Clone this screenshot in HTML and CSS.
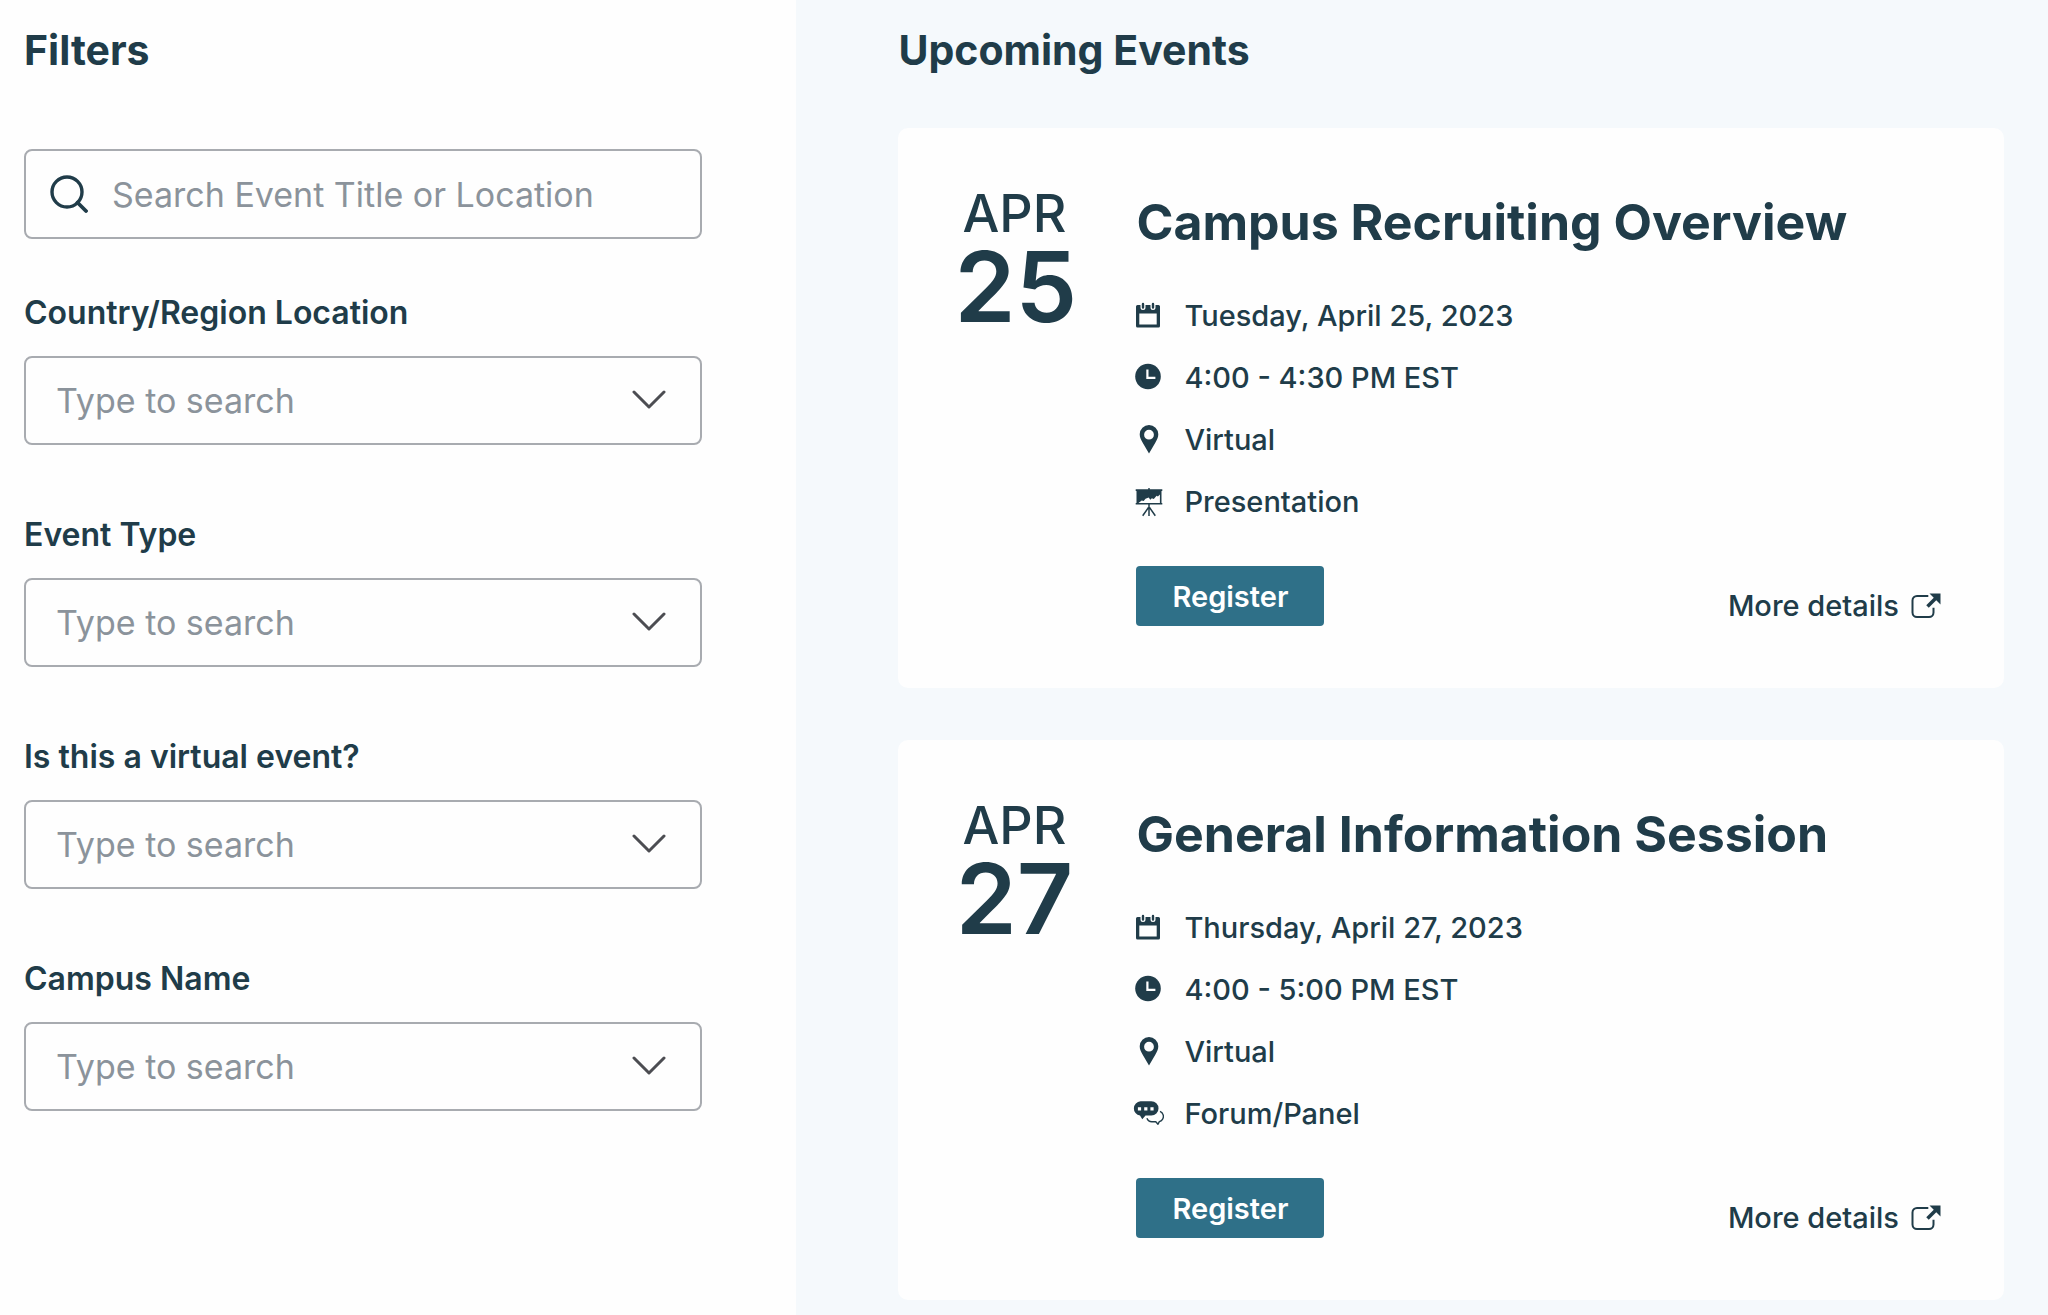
FILE: index.html
```
<!DOCTYPE html>
<html lang="en">
<head>
    <meta charset="UTF-8">
    <meta name="viewport" content="width=device-width, initial-scale=1.0">
    <title>Upcoming Events</title>
    <link rel="stylesheet" href="styles.css">
</head>
<body>
    <!-- Icons shared by the filters and event cards -->
    <svg class="sprite" aria-hidden="true">
        <symbol id="icon-calendar" viewBox="0 0 32 32">
            <path fill="currentColor" fill-rule="evenodd" d="M5.5 5h21A1.5 1.5 0 0 1 28 6.5V26a1.5 1.5 0 0 1-1.5 1.5h-21A1.5 1.5 0 0 1 4 26V6.5A1.5 1.5 0 0 1 5.5 5zM7.3 13.5v11h17.4v-11z"/>
            <path d="M11 4v3.5M21 4v3.5" stroke="#fff" stroke-width="5" stroke-linecap="round"/>
            <path d="M11 4v3.5M21 4v3.5" stroke="currentColor" stroke-width="2.4" stroke-linecap="round"/>
        </symbol>
        <symbol id="icon-clock" viewBox="0 0 32 32">
            <circle cx="16" cy="14.5" r="12.8" fill="currentColor"/>
            <path d="M15.4 7.5v8.3h8" fill="none" stroke="#fff" stroke-width="2.2"/>
        </symbol>
        <symbol id="icon-pin" viewBox="0 0 32 32">
            <path fill="currentColor" fill-rule="evenodd" d="M17 1a9.3 9.3 0 0 1 9.3 9.3c0 3-1.3 5.5-3 8.5L17 29.5l-6.3-10.7c-1.7-3-3-5.5-3-8.5A9.3 9.3 0 0 1 17 1zm0 4.8a4.9 4.9 0 1 0 0 9.8 4.9 4.9 0 0 0 0-9.8z"/>
        </symbol>
        <symbol id="icon-presentation" viewBox="0 0 32 32">
            <path fill="currentColor" fill-rule="evenodd" d="M16.3 2h1.4v1.3h12.6v1.6h-.8v12h.8v1.6H3.7v-1.6h.8v-12h-.8V3.3h12.6zM6.5 16.9h21.4V8.5l-2 2-1.3-.8-2.8 3.3-2-.8-1.5 1.6-1.6-2.3-3.2 1.2-1.8 2.4-2-.6z"/>
            <path d="M17 18v12M16.5 21.5l-5.8 8.3M17.5 21.5l5.8 8.3" fill="none" stroke="currentColor" stroke-width="1.5"/>
        </symbol>
        <symbol id="icon-forum" viewBox="0 0 32 32">
            <path fill="currentColor" d="M8.5 3.2h10.8a7.2 7.2 0 0 1 0 14.4h-5.8L10.3 21.3 8 17.5a7.2 7.2 0 0 1 .5-14.3z"/>
            <path fill="#fff" d="M5.9 9.2h3.2v3.2H5.9zM12.2 9.2h3.2v3.2h-3.2zM18.4 9.2h3.2v3.2h-3.2z"/>
            <path d="M28 13.3c3.3 1.5 4.3 5.3 2.5 8-.8 1.2-1.9 2-3.2 2.3L26 26.3l-2.2-2.6h-4c-2.2 0-4.1-1.5-4.9-3.5" fill="none" stroke="currentColor" stroke-width="1.4" stroke-linejoin="round"/>
        </symbol>
        <symbol id="icon-external" viewBox="0 0 30 26">
            <path d="M17.3 3H6a4.5 4.5 0 0 0-4.5 4.5v12A4.5 4.5 0 0 0 6 24h12a4.5 4.5 0 0 0 4.5-4.5v-4.8" fill="none" stroke="currentColor" stroke-width="2"/>
            <path d="M16.5 13.5L25 5" stroke="currentColor" stroke-width="3.6"/>
            <path d="M18.5.5h11v11z" fill="currentColor"/>
        </symbol>
        <symbol id="icon-chevron" viewBox="0 0 34 20">
            <path d="M2 2l15 15L32 2" fill="none" stroke="currentColor" stroke-width="3" stroke-linecap="round" stroke-linejoin="round"/>
        </symbol>
    </svg>

    <div class="layout">
        <aside class="filters">
            <h2 class="section-title">Filters</h2>
            <form>
                <div class="search-box">
                    <svg class="search-icon" viewBox="0 0 38 38" aria-hidden="true">
                        <circle cx="17" cy="17" r="15" fill="none" stroke="currentColor" stroke-width="3.4"/>
                        <path d="M27.5 27.5L36 36" stroke="currentColor" stroke-width="3.8" stroke-linecap="round"/>
                    </svg>
                    <input type="text" aria-label="Search events" placeholder="Search Event Title or Location">
                </div>

                <div class="field">
                    <label for="country">Country/Region Location</label>
                    <div class="select-box">
                        <select id="country"><option>Type to search</option></select>
                        <svg class="chevron" aria-hidden="true"><use href="#icon-chevron"/></svg>
                    </div>
                </div>

                <div class="field">
                    <label for="eventType">Event Type</label>
                    <div class="select-box">
                        <select id="eventType"><option>Type to search</option></select>
                        <svg class="chevron" aria-hidden="true"><use href="#icon-chevron"/></svg>
                    </div>
                </div>

                <div class="field">
                    <label for="virtual">Is this a virtual event?</label>
                    <div class="select-box">
                        <select id="virtual"><option>Type to search</option></select>
                        <svg class="chevron" aria-hidden="true"><use href="#icon-chevron"/></svg>
                    </div>
                </div>

                <div class="field">
                    <label for="campus">Campus Name</label>
                    <div class="select-box">
                        <select id="campus"><option>Type to search</option></select>
                        <svg class="chevron" aria-hidden="true"><use href="#icon-chevron"/></svg>
                    </div>
                </div>
            </form>
        </aside>

        <main class="events">
            <h2 class="section-title">Upcoming Events</h2>

            <div class="event-list">
                <article class="event-card">
                    <div class="event-date">
                        <div class="month">APR</div>
                        <div class="day">25</div>
                    </div>
                    <div class="event-info">
                        <h3 class="event-title">Campus Recruiting Overview</h3>
                        <ul class="event-meta">
                            <li><svg class="icon" aria-hidden="true"><use href="#icon-calendar"/></svg>Tuesday, April 25, 2023</li>
                            <li><svg class="icon" aria-hidden="true"><use href="#icon-clock"/></svg>4:00 - 4:30 PM EST</li>
                            <li><svg class="icon" aria-hidden="true"><use href="#icon-pin"/></svg>Virtual</li>
                            <li><svg class="icon" aria-hidden="true"><use href="#icon-presentation"/></svg>Presentation</li>
                        </ul>
                        <div class="event-actions">
                            <button type="button" class="register-btn">Register</button>
                            <a href="#" class="details-link">More details
                                <svg class="external-icon" aria-hidden="true"><use href="#icon-external"/></svg>
                            </a>
                        </div>
                    </div>
                </article>

                <article class="event-card">
                    <div class="event-date">
                        <div class="month">APR</div>
                        <div class="day">27</div>
                    </div>
                    <div class="event-info">
                        <h3 class="event-title">General Information Session</h3>
                        <ul class="event-meta">
                            <li><svg class="icon" aria-hidden="true"><use href="#icon-calendar"/></svg>Thursday, April 27, 2023</li>
                            <li><svg class="icon" aria-hidden="true"><use href="#icon-clock"/></svg>4:00 - 5:00 PM EST</li>
                            <li><svg class="icon" aria-hidden="true"><use href="#icon-pin"/></svg>Virtual</li>
                            <li><svg class="icon" aria-hidden="true"><use href="#icon-forum"/></svg>Forum/Panel</li>
                        </ul>
                        <div class="event-actions">
                            <button type="button" class="register-btn">Register</button>
                            <a href="#" class="details-link">More details
                                <svg class="external-icon" aria-hidden="true"><use href="#icon-external"/></svg>
                            </a>
                        </div>
                    </div>
                </article>
            </div>
        </main>
    </div>
</body>
</html>
```
FILE: styles.css
```
:root {
    --page-bg: #f5f9fc;
    --panel-bg: #fefefe;
    --text: #203c49;
    --placeholder: #8b939b;
    --border: #a8abb0;
    --button: #2f7088;
}

* {
    margin: 0;
    padding: 0;
    box-sizing: border-box;
    font-family: 'Inter', sans-serif;
}

body {
    background-color: var(--page-bg);
    color: var(--text);
}

.sprite {
    display: none;
}

.layout {
    display: grid;
    grid-template-columns: 7fr 11fr;
    min-height: 100vh;
}

.section-title {
    font-size: 41px;
    font-weight: 700;
    line-height: 48px;
}

/* Filters */

.filters {
    padding: 26px 94px 26px 24px;
    background-color: var(--panel-bg);
}

.search-box {
    display: flex;
    align-items: center;
    gap: 24px;
    height: 90px;
    margin: 75px 0 54px;
    padding: 0 24px;
    border: 2px solid var(--border);
    border-radius: 8px;
}

.search-icon {
    flex: none;
    width: 38px;
    height: 38px;
}

.search-box input {
    flex: 1;
    min-width: 0;
    border: none;
    outline: none;
    background: none;
    color: var(--text);
    font-size: 34px;
}

.search-box input::placeholder {
    color: var(--placeholder);
}

.field {
    margin-bottom: 70px;
}

.field label {
    display: block;
    margin-bottom: 23px;
    font-size: 32px;
    font-weight: 600;
    line-height: 40px;
}

.select-box {
    position: relative;
}

.select-box select {
    display: block;
    width: 100%;
    height: 89px;
    padding: 0 80px 0 30px;
    appearance: none;
    border: 2px solid var(--border);
    border-radius: 8px;
    background: none;
    color: var(--placeholder);
    font-size: 34px;
}

.chevron {
    position: absolute;
    top: 34px;
    right: 36px;
    width: 34px;
    height: 20px;
    color: #4c4d52;
    pointer-events: none;
}

/* Events */

.events {
    padding: 26px 44px 15px 102px;
}

.event-list {
    display: grid;
    gap: 52px;
    margin-top: 54px;
}

.event-card {
    display: flex;
    gap: 62px;
    padding: 56px 63px 62px 56px;
    border-radius: 10px;
    background-color: var(--panel-bg);
}

.event-date {
    flex: none;
    width: 120px;
    text-align: center;
}

.month {
    font-size: 52px;
    font-weight: 500;
    line-height: 60px;
}

.day {
    font-size: 98px;
    font-weight: 600;
    line-height: 86px;
}

.event-info {
    flex: 1;
    padding-top: 8px;
}

.event-title {
    font-size: 50px;
    font-weight: 700;
    line-height: 60px;
}

.event-meta {
    display: grid;
    gap: 26px;
    margin: 46px 0;
    list-style: none;
}

.event-meta li {
    display: flex;
    align-items: center;
    gap: 20px;
    margin-left: -4px;
    font-size: 29px;
    font-weight: 500;
    line-height: 36px;
}

.icon {
    flex: none;
    width: 32px;
    height: 32px;
    overflow: visible;
}

.event-actions {
    display: flex;
    justify-content: space-between;
    align-items: flex-end;
}

.register-btn {
    height: 60px;
    padding: 0 36px;
    border: none;
    border-radius: 4px;
    background-color: var(--button);
    color: #fff;
    font-size: 29px;
    font-weight: 600;
    cursor: pointer;
}

.details-link {
    display: flex;
    align-items: center;
    gap: 12px;
    color: var(--text);
    font-size: 29px;
    font-weight: 500;
    line-height: 40px;
    text-decoration: none;
}

.external-icon {
    width: 30px;
    height: 26px;
}

@media (max-width: 1400px) {
    .layout {
        grid-template-columns: 1fr;
    }

    .filters,
    .events {
        padding-left: 24px;
        padding-right: 24px;
    }
}
```
